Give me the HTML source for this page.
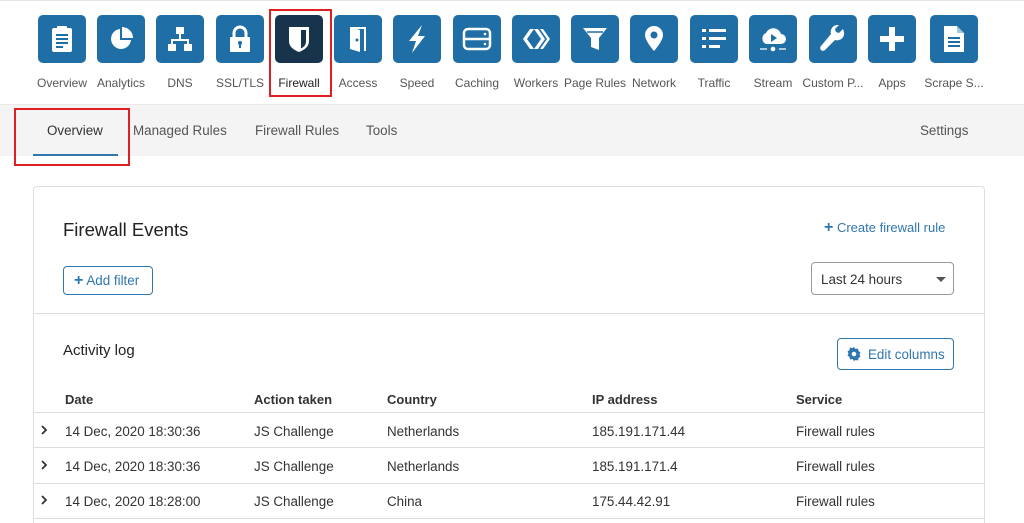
<!DOCTYPE html>
<html style="overflow:hidden"><head><meta charset="utf-8"><style>
*{margin:0;padding:0;box-sizing:border-box}
html,body{width:1024px;height:523px;overflow:hidden}
body{background:#fff;font-family:"Liberation Sans",Arial,sans-serif;position:relative;color:#333}
.a{position:absolute}
.ic{position:absolute;top:15px;width:48px;height:48px;border-radius:5px;background:#1f6ea5;display:flex;align-items:center;justify-content:center}
.lb{position:absolute;top:76px;font-size:12px;color:#555;width:70px;text-align:center;white-space:nowrap}
.t{position:absolute;font-size:13.4px;color:#333}
.h{position:absolute;font-size:13px;font-weight:bold;color:#333;top:392px}
.line{position:absolute;left:34px;width:950px;height:1px;background:#ddd}
.chev{position:absolute;left:40px}
</style></head><body>
<div class="a" style="left:0;top:0;width:1024px;height:1px;background:#e5e5e5"></div>
<div class="ic" style="left:38px"><svg width="24" height="28" viewBox="0 0 24 28"><rect x="2" y="3" width="20" height="24" rx="2" fill="#fff"/><rect x="7" y="1" width="10" height="4" rx="1" fill="#fff"/><g stroke="#1f6ea5" stroke-width="2"><path d="M6 10h12M6 14h12M6 18h12M6 22h7"/></g></svg></div>
<div class="ic" style="left:97px"><svg width="26" height="26" viewBox="0 0 26 26"><path d="M12 3A10 10 0 1 0 23 14H12z" fill="#fff"/><path d="M14 1v11h11A11 11 0 0 0 14 1z" fill="#fff"/></svg></div>
<div class="ic" style="left:156px"><svg width="26" height="26" viewBox="0 0 26 26" fill="#fff"><rect x="9" y="1" width="8" height="7"/><rect x="1" y="18" width="8" height="7"/><rect x="17" y="18" width="8" height="7"/><path d="M12 8h2v5h8v5h-2v-3H6v3H4v-5h8z"/></svg></div>
<div class="ic" style="left:216px"><svg width="24" height="28" viewBox="0 0 24 28"><path d="M6 13V8a6 6 0 0 1 12 0v5" stroke="#fff" stroke-width="3" fill="none"/><rect x="2" y="12" width="20" height="15" rx="1" fill="#fff"/><circle cx="12" cy="18" r="2" fill="#1f6ea5"/><rect x="11" y="18" width="2" height="5" fill="#1f6ea5"/></svg></div>
<div class="ic" style="left:275px;background:#17344c"><svg width="22" height="28" viewBox="0 0 22 28"><path d="M1 2h20v14c0 6-5 9-10 11C6 25 1 22 1 16z" fill="#fff"/><path d="M13 5h5v11c0 4-2 6-5 7.5z" fill="#17344c"/></svg></div>
<div class="ic" style="left:334px"><svg width="24" height="28" viewBox="0 0 24 28" fill="#fff"><path d="M4 2h16v24h-2V4H6z"/><path d="M4 2l10 3v22L4 24z"/><circle cx="11" cy="15" r="1.5" fill="#1f6ea5"/></svg></div>
<div class="ic" style="left:393px"><svg width="22" height="30" viewBox="0 0 22 30"><path d="M16 1L3 17h7l-4 12L19 12h-7z" fill="#fff"/></svg></div>
<div class="ic" style="left:453px"><svg width="30" height="26" viewBox="0 0 30 26"><rect x="2" y="3" width="26" height="20" rx="4" fill="none" stroke="#fff" stroke-width="2.5"/><path d="M2 13h26" stroke="#fff" stroke-width="2.5"/><circle cx="23" cy="8" r="1.3" fill="#fff"/><circle cx="23" cy="18" r="1.3" fill="#fff"/></svg></div>
<div class="ic" style="left:512px"><svg width="30" height="26" viewBox="0 0 30 26" fill="#fff"><path d="M9 3l-7 10 7 10h4L6 13l7-10z"/><path d="M13 3l7 10-7 10h4l7-10-7-10z"/><path d="M19 3l7 10-7 10h3l7-10-7-10z"/></svg></div>
<div class="ic" style="left:571px"><svg width="28" height="28" viewBox="0 0 28 28"><path d="M2 3h24l-8 10v12l-8-3V13z" fill="#fff"/><path d="M6 7h16" stroke="#1f6ea5" stroke-width="1.5"/></svg></div>
<div class="ic" style="left:630px"><svg width="22" height="28" viewBox="0 0 22 28"><path d="M11 1a9 9 0 0 1 9 9c0 6-9 16-9 16S2 16 2 10a9 9 0 0 1 9-9z" fill="#fff"/><circle cx="11" cy="10" r="3.5" fill="#1f6ea5"/></svg></div>
<div class="ic" style="left:690px"><svg width="26" height="24" viewBox="0 0 26 24" fill="#fff"><rect x="1" y="2" width="4" height="3"/><rect x="8" y="2" width="17" height="3"/><rect x="1" y="10" width="4" height="3"/><rect x="8" y="10" width="17" height="3"/><rect x="1" y="18" width="4" height="3"/><rect x="8" y="18" width="11" height="3"/></svg></div>
<div class="ic" style="left:749px"><svg width="30" height="28" viewBox="0 0 30 28"><path d="M8 19a6 6 0 0 1 0-11 8 8 0 0 1 15 1 5 5 0 0 1 0 10z" fill="#fff"/><path d="M13 9l6 4-6 4z" fill="#1f6ea5"/><path d="M2 24h7M21 24h7" stroke="#fff" stroke-width="1.2"/><circle cx="15" cy="24" r="2.3" fill="#fff"/></svg></div>
<div class="ic" style="left:809px"><svg width="28" height="28" viewBox="0 0 28 28"><path d="M24 4l-4 4-3-1-1-3 4-4a7 7 0 0 0-8 9L2 21a2.5 2.5 0 0 0 4 4l10-10a7 7 0 0 0 9-8z" fill="#fff"/></svg></div>
<div class="ic" style="left:868px"><svg width="28" height="28" viewBox="0 0 28 28"><path d="M11 2h6v9h9v6h-9v9h-6v-9H2v-6h9z" fill="#fff"/></svg></div>
<div class="ic" style="left:930px"><svg width="22" height="28" viewBox="0 0 22 28"><path d="M1 1h13l7 7v19H1z" fill="#fff"/><path d="M14 1v7h7" fill="#1f6ea5" opacity=".4"/><g stroke="#1f6ea5" stroke-width="2"><path d="M5 13h12M5 17h12M5 21h12"/></g></svg></div>
<div class="lb" style="left:27px">Overview</div>
<div class="lb" style="left:86px">Analytics</div>
<div class="lb" style="left:145px">DNS</div>
<div class="lb" style="left:205px">SSL/TLS</div>
<div class="lb" style="left:264px;color:#222">Firewall</div>
<div class="lb" style="left:323px">Access</div>
<div class="lb" style="left:382px">Speed</div>
<div class="lb" style="left:442px">Caching</div>
<div class="lb" style="left:501px">Workers</div>
<div class="lb" style="left:560px">Page Rules</div>
<div class="lb" style="left:619px">Network</div>
<div class="lb" style="left:679px">Traffic</div>
<div class="lb" style="left:738px">Stream</div>
<div class="lb" style="left:798px">Custom P...</div>
<div class="lb" style="left:857px">Apps</div>
<div class="lb" style="left:919px">Scrape S...</div>
<div class="a" style="left:269px;top:9px;width:63px;height:88px;border:2px solid #e02020"></div>
<div class="a" style="left:0;top:104px;width:1024px;height:52px;background:#f4f4f4;border-top:1px solid #e8e8e8"></div>
<div class="t" style="left:47px;top:123px;color:#333">Overview</div>
<div class="t" style="left:133px;top:123px;color:#555">Managed Rules</div>
<div class="t" style="left:255px;top:123px;color:#555">Firewall Rules</div>
<div class="t" style="left:366px;top:123px;color:#555">Tools</div>
<div class="t" style="left:920px;top:123px;color:#555">Settings</div>
<div class="a" style="left:33px;top:154px;width:85px;height:2px;background:#2f77b0"></div>
<div class="a" style="left:14px;top:108px;width:116px;height:58px;border:2px solid #e02020"></div>
<div class="a" style="left:33px;top:186px;width:952px;height:360px;border:1px solid #ddd;border-radius:4px"></div>
<div class="a" style="left:63px;top:219px;font-size:18.5px;color:#222">Firewall Events</div>
<div class="a" style="left:824px;top:219px;font-size:13px;color:#2f77b0"><b style="font-size:16px;font-weight:bold">+</b> Create firewall rule</div>
<div class="a" style="left:63px;top:266px;width:90px;height:29px;border:1px solid #2f77b0;border-radius:4px;font-size:13.4px;color:#2f77b0;padding:6px 0 0 10px"><b style="font-size:16px;line-height:13px">+</b> Add filter</div>
<div class="a" style="left:811px;top:262px;width:143px;height:33px;border:1px solid #999;border-radius:4px;font-size:13.4px;color:#333;padding:9px 0 0 9px">Last 24 hours</div>
<div class="a" style="left:936px;top:277px;width:0;height:0;border-left:5px solid transparent;border-right:5px solid transparent;border-top:5px solid #555"></div>
<div class="a" style="left:34px;top:313px;width:950px;height:1px;background:#ddd"></div>
<div class="a" style="left:63px;top:342px;font-size:15px;color:#222">Activity log</div>
<div class="a" style="left:837px;top:338px;width:117px;height:32px;border:1px solid #2f77b0;border-radius:4px;font-size:13.4px;color:#2f77b0;padding:8px 0 0 9px"><svg width="14" height="14" viewBox="0 0 14 14" style="vertical-align:-2px;margin-right:7px"><path d="M7 0l1.5 2 2.5-.5.5 2.5 2 1.5-1 2 1 2-2 1.5-.5 2.5-2.5-.5L7 14l-1.5-2-2.5.5-.5-2.5-2-1.5 1-2-1-2 2-1.5.5-2.5 2.5.5z" fill="#2f77b0"/><circle cx="7" cy="7" r="2.3" fill="#fff"/></svg>Edit columns</div>
<div class="h" style="left:65px">Date</div>
<div class="h" style="left:254px">Action taken</div>
<div class="h" style="left:387px">Country</div>
<div class="h" style="left:592px">IP address</div>
<div class="h" style="left:796px">Service</div>
<div class="line" style="top:412px"></div>
<div class="line" style="top:447px"></div>
<div class="line" style="top:483px"></div>
<div class="line" style="top:518px"></div>
<svg class="chev" style="top:425px" width="8" height="10" viewBox="0 0 8 10"><path d="M2 1l4 4-4 4" stroke="#333" stroke-width="1.8" fill="none"/></svg>
<div class="t" style="left:65px;top:424px">14 Dec, 2020 18:30:36</div>
<div class="t" style="left:254px;top:424px">JS Challenge</div>
<div class="t" style="left:387px;top:424px">Netherlands</div>
<div class="t" style="left:592px;top:424px">185.191.171.44</div>
<div class="t" style="left:796px;top:424px">Firewall rules</div>
<svg class="chev" style="top:460px" width="8" height="10" viewBox="0 0 8 10"><path d="M2 1l4 4-4 4" stroke="#333" stroke-width="1.8" fill="none"/></svg>
<div class="t" style="left:65px;top:459px">14 Dec, 2020 18:30:36</div>
<div class="t" style="left:254px;top:459px">JS Challenge</div>
<div class="t" style="left:387px;top:459px">Netherlands</div>
<div class="t" style="left:592px;top:459px">185.191.171.4</div>
<div class="t" style="left:796px;top:459px">Firewall rules</div>
<svg class="chev" style="top:495px" width="8" height="10" viewBox="0 0 8 10"><path d="M2 1l4 4-4 4" stroke="#333" stroke-width="1.8" fill="none"/></svg>
<div class="t" style="left:65px;top:494px">14 Dec, 2020 18:28:00</div>
<div class="t" style="left:254px;top:494px">JS Challenge</div>
<div class="t" style="left:387px;top:494px">China</div>
<div class="t" style="left:592px;top:494px">175.44.42.91</div>
<div class="t" style="left:796px;top:494px">Firewall rules</div>
</body></html>
